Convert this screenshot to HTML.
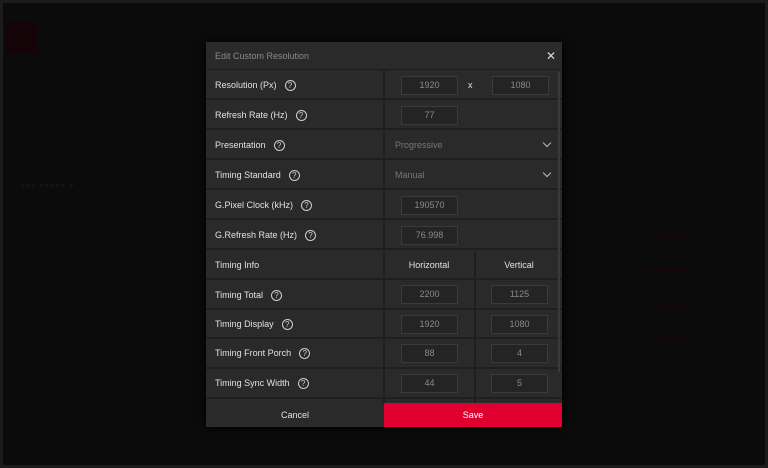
<!DOCTYPE html>
<html><head><meta charset="utf-8"><style>
*{margin:0;padding:0;box-sizing:border-box}
body{width:768px;height:468px;background:#1c1c1c;font-family:"Liberation Sans",sans-serif;overflow:hidden;position:relative}
.bg{position:absolute;left:3px;top:3px;width:762px;height:462px;background:#0b0b0b}
.f{position:absolute;color:#141414;font-size:9px}
.dlg{position:absolute;left:206px;top:42px;width:356px;height:385px;background:#2a2a2a;box-shadow:0 0 10px #000}
.hdr{height:28px;line-height:28px;padding-left:9px;color:#8a8a8a;font-size:9px;border-bottom:1px solid #1c1c1c;position:relative}
.x{position:absolute;right:6px;top:0;color:#ddd;font-size:12px}
.row{position:absolute;left:0;width:356px;border-bottom:2px solid #1f1f1f}
.lab{position:absolute;left:9px;color:#e2e2e2;font-size:9px}
.q{display:inline-block;width:11px;height:11px;border:1px solid #cfcfcf;border-radius:50%;font-size:8px;line-height:9px;text-align:center;margin-left:8px;vertical-align:middle;color:#cfcfcf}
.vd{position:absolute;top:0;width:2px;background:#1f1f1f}
.in{position:absolute;width:57px;height:19px;background:#242424;border:1px solid #3a3a3a;color:#8a8a8a;font-size:9px;text-align:center;line-height:17px}
.sel{position:absolute;left:11px;color:#777;font-size:9px}
.chev{position:absolute;right:12px;width:6px;height:6px;border-right:1.5px solid #bbb;border-bottom:1.5px solid #bbb;transform:rotate(45deg)}
.hd{position:absolute;color:#e2e2e2;font-size:9px;text-align:center}
</style></head><body>
<div class="bg"></div>
<div style="position:absolute;left:6px;top:22px;width:32px;height:32px;background:#140407"></div>
<div class="f" style="left:20px;top:180px">●●● ●●●●● ●</div>
<div style="position:absolute;left:645px;top:235px;width:48px;height:2px;background:#160406"></div>
<div style="position:absolute;left:645px;top:270px;width:48px;height:2px;background:#160406"></div>
<div style="position:absolute;left:645px;top:305px;width:48px;height:2px;background:#160406"></div>
<div style="position:absolute;left:645px;top:340px;width:48px;height:2px;background:#160406"></div>
<div class="dlg">
<div class="hdr">Edit Custom Resolution<span class="x">✕</span></div>
<div style="position:absolute;left:0;top:28px;width:356px;height:333px;overflow:hidden">
 <div class="vd" style="left:177px;height:333px"></div>
 <div class="vd" style="left:268px;top:181px;height:152px"></div>
 <div class="row" style="top:0;height:30px"><div class="lab" style="top:10px">Resolution (Px)<span class="q">?</span></div><div class="in" style="left:195px;top:6px">1920</div><div class="hd" style="left:262px;top:10px">x</div><div class="in" style="left:286px;top:6px">1080</div></div>
 <div class="row" style="top:30px;height:30px"><div class="lab" style="top:10px">Refresh Rate (Hz)<span class="q">?</span></div><div class="in" style="left:195px;top:6px">77</div></div>
 <div class="row" style="top:60px;height:30px"><div class="lab" style="top:10px">Presentation<span class="q">?</span></div><div class="sel" style="left:189px;top:10px">Progressive</div><div class="chev" style="top:10px"></div></div>
 <div class="row" style="top:90px;height:30px"><div class="lab" style="top:10px">Timing Standard<span class="q">?</span></div><div class="sel" style="left:189px;top:10px">Manual</div><div class="chev" style="top:10px"></div></div>
 <div class="row" style="top:120px;height:30px"><div class="lab" style="top:10px">G.Pixel Clock (kHz)<span class="q">?</span></div><div class="in" style="left:195px;top:6px">190570</div></div>
 <div class="row" style="top:150px;height:30px"><div class="lab" style="top:10px">G.Refresh Rate (Hz)<span class="q">?</span></div><div class="in" style="left:195px;top:6px">76.998</div></div>
 <div class="row" style="top:180px;height:30px"><div class="lab" style="top:10px">Timing Info</div><div class="hd" style="left:178px;width:90px;top:10px">Horizontal</div><div class="hd" style="left:270px;width:86px;top:10px">Vertical</div></div>
 <div class="row" style="top:210px;height:30px"><div class="lab" style="top:10px">Timing Total<span class="q">?</span></div><div class="in" style="left:195px;top:5px">2200</div><div class="in" style="left:285px;top:5px">1125</div></div>
 <div class="row" style="top:240px;height:29px"><div class="lab" style="top:9px">Timing Display<span class="q">?</span></div><div class="in" style="left:195px;top:5px">1920</div><div class="in" style="left:285px;top:5px">1080</div></div>
 <div class="row" style="top:269px;height:30px"><div class="lab" style="top:9px">Timing Front Porch<span class="q">?</span></div><div class="in" style="left:195px;top:5px">88</div><div class="in" style="left:285px;top:5px">4</div></div>
 <div class="row" style="top:299px;height:30px"><div class="lab" style="top:9px">Timing Sync Width<span class="q">?</span></div><div class="in" style="left:195px;top:5px">44</div><div class="in" style="left:285px;top:5px">5</div></div>
 <div style="position:absolute;left:352px;top:2px;width:2px;height:300px;background:#3a3a3a"></div>
</div>
<div style="position:absolute;left:0;top:361px;width:178px;height:24px;background:#2a2a2a;color:#e2e2e2;font-size:9px;text-align:center;line-height:24px">Cancel</div>
<div style="position:absolute;left:178px;top:361px;width:178px;height:24px;background:#df0030;color:#fff;font-size:9px;text-align:center;line-height:24px">Save</div>
</div>
</body></html>
